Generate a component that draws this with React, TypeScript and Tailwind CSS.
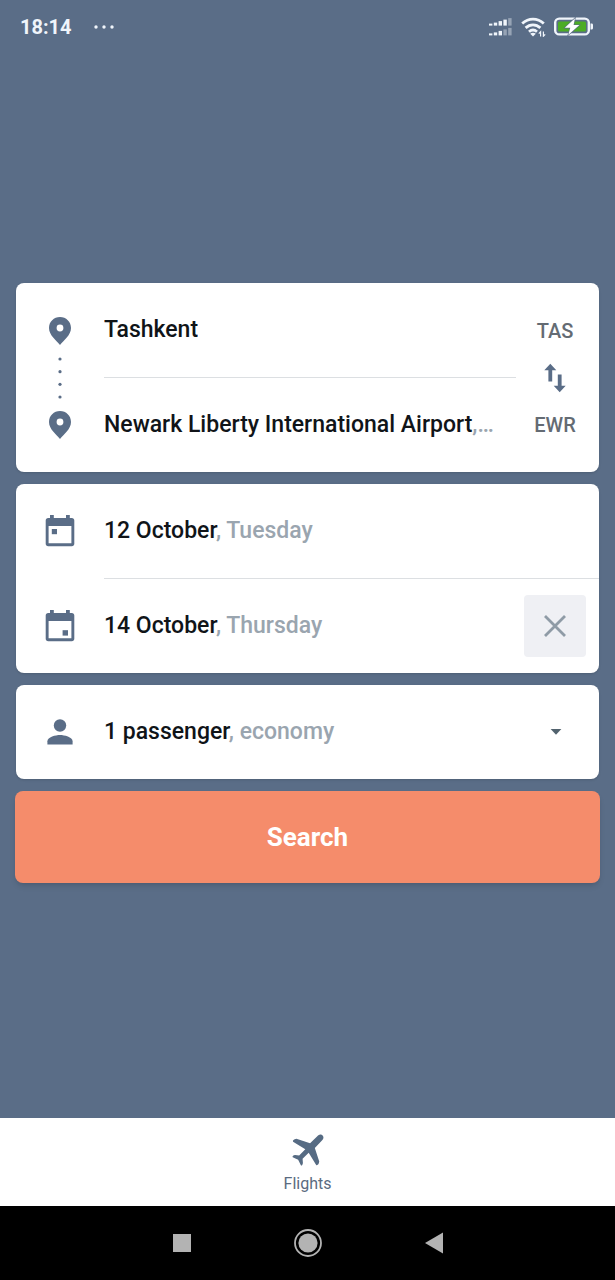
import React, { useState } from "react";

function SignalIcon() {
  const heights = [2, 3, 4.5, 6, 7.5];
  return (
    <svg width="24" height="20" viewBox="0 0 24 20" fill="#f0f5fb" aria-hidden="true">
      {heights.map((h, i) => (
        <g key={i}>
          <rect x={i * 4.8} y={8.6 - h} width="3.4" height={h} opacity={i > 3 ? 0.4 : 1} />
          <rect x={i * 4.8} y={18.4 - h} width="3.4" height={h} opacity={i > 2 ? 0.4 : 1} />
        </g>
      ))}
    </svg>
  );
}

function WifiIcon() {
  return (
    <svg width="25" height="20" viewBox="0 0 25 20" fill="none" stroke="#f0f5fb" strokeWidth="2.8" aria-hidden="true">
      <path d="M1.2 6.6C7.6 0.6 16.4 0.6 22.8 6.6" />
      <path d="M4.6 10.9C9 6.9 15 6.9 19.4 10.9" />
      <path d="M8 14.8C10.5 12.6 13.5 12.6 16 14.8" />
      <path d="M12 19.600l-2.800-2.800c1.600-1.500 4-1.500 5.600 0z" fill="#f0f5fb" stroke="none" />
      <path d="M19.600 19.400v-4.600l-1.800 1.800M22.400 14.600v4.600l1.800-1.800" strokeWidth="1.200" />
    </svg>
  );
}

function BatteryIcon() {
  return (
    <svg width="41" height="20" viewBox="0 0 41 20" aria-hidden="true">
      <rect x="1.200" y="1.600" width="33.600" height="15.800" rx="4" fill="none" stroke="#f0f5fb" strokeWidth="2.400" />
      <rect x="4" y="4.500" width="28" height="10" rx="1.500" fill="#4cac25" />
      <path d="M36.500 6.500h1c1 0 1.500.6 1.500 1.500v3c0 .9-.5 1.500-1.500 1.500h-1z" fill="#f0f5fb" />
      <path
        d="M21 1.200L10.800 10.800h5.500L14.200 18 25.400 8h-5.800z"
        fill="#fff"
        stroke="#5a6d87"
        strokeWidth="1.200"
        paintOrder="stroke"
      />
    </svg>
  );
}

function PinIcon() {
  return (
    <svg width="22" height="28" viewBox="0 0 22 28" fill="#5a6d87" aria-hidden="true">
      <path
        fillRule="evenodd"
        d="M11 0C4.900 0 0 4.800 0 10.900 0 18.200 7.500 23.400 11 28c3.500-4.600 11-9.800 11-17.100C22 4.800 17.100 0 11 0zm0 7.600a3.400 3.400 0 1 1 0 6.800 3.400 3.400 0 0 1 0-6.800z"
      />
    </svg>
  );
}

function DotsIcon() {
  return (
    <svg width="4" height="42" viewBox="0 0 4 42" fill="#5a6d87" aria-hidden="true">
      <circle cx="2" cy="2" r="1.600" />
      <circle cx="2" cy="14.700" r="1.600" />
      <circle cx="2" cy="27.300" r="1.600" />
      <circle cx="2" cy="40" r="1.600" />
    </svg>
  );
}

function CalendarIcon({ late = false }: { late?: boolean }) {
  return (
    <svg width="30" height="32" viewBox="0 0 30 32" fill="#5a6d87" aria-hidden="true">
      <rect x="5" y="0" width="3.800" height="6" />
      <rect x="21" y="0" width="3.800" height="6" />
      <path
        fillRule="evenodd"
        d="M3.200 3h23.600C28.300 3 29.300 4 29.300 5.500v23.200c0 1.500-1 2.500-2.500 2.500H3.200C1.700 31.200.7 30.200.7 28.700V5.500C.7 4 1.700 3 3.200 3zM3.600 11v17.300h22.800V11z"
      />
      {late ? <rect x="17.600" y="20.200" width="5.400" height="5.400" /> : <rect x="6.800" y="14" width="5.200" height="5.200" />}
    </svg>
  );
}

function PersonIcon() {
  return (
    <svg width="26" height="26" viewBox="0 0 26 26" fill="#5a6d87" aria-hidden="true">
      <circle cx="13" cy="6.500" r="6.200" />
      <path d="M.4 25.400v-3.200C.4 18 8.800 16 13 16s12.600 2 12.600 6.200v3.200z" />
    </svg>
  );
}

function SwapIcon() {
  return (
    <svg width="22" height="30" viewBox="0 0 22 30" fill="#5a6d87" aria-hidden="true">
      <path d="M6.300.8l6 6.400H8.200v11.300H4.400V7.200H.3z" />
      <path d="M15.700 29.200l-6-6.400h4.100V11.500h3.800v11.300h4.100z" />
    </svg>
  );
}

function PlaneIcon() {
  return (
    <svg width="34" height="32" viewBox="-7 -1 100 94" fill="#566b83" aria-hidden="true">
      <path d="M89 3C93 7 92 13 87 18L66 40L79 80C78 88 74 92 70 90L48 54L30 72L31 84C30 90 27 93 25 91L17 75L1 67C-1 65 2 62 8 61L20 62L38 44L2 22C0 18 4 14 12 13L52 26L74 5C79 0 85-1 89 3Z" />
    </svg>
  );
}

const card = "mx-px rounded-lg bg-white shadow-sm";
const rowButton = "flex min-h-[94px] min-w-0 flex-1 items-center text-left";
const iconCell = "flex w-[88px] shrink-0 justify-center";

export default function App() {
  const [reversed, setReversed] = useState(false);
  const [hasReturn, setHasReturn] = useState(true);
  const places = [
    { name: "Tashkent", rest: "", code: "TAS" },
    { name: "Newark Liberty International Airport", rest: ",…", code: "EWR" },
  ];
  const [from, to] = reversed ? [places[1], places[0]] : places;

  return (
    <div className="flex min-h-screen flex-col bg-[#5a6d87] font-['Roboto',sans-serif] text-[23px] leading-7 font-medium text-[#101418]">
      <header className="flex h-[54px] items-center px-5 text-[#f0f5fb]">
        <time className="text-[20px] font-bold">18:14</time>
        <svg className="ml-[22px]" width="22" height="4" viewBox="0 0 22 4" fill="#f0f5fb" aria-hidden="true">
          <circle cx="2" cy="2" r="1.700" />
          <circle cx="10" cy="2" r="1.700" />
          <circle cx="18" cy="2" r="1.700" />
        </svg>
        <div className="ml-auto flex items-center gap-2">
          <SignalIcon />
          <WifiIcon />
          <BatteryIcon />
        </div>
      </header>

      <main className="flex flex-1 flex-col justify-center gap-3 px-[15px] pb-1.5">
        <section className={`${card} flex`}>
          <div className="flex w-[88px] shrink-0 flex-col items-center justify-center gap-3">
            <PinIcon />
            <DotsIcon />
            <PinIcon />
          </div>
          <div className="flex min-w-0 flex-1 flex-col">
            <button type="button" className={rowButton}>
              <span className="truncate">{from.name}<span className="text-[#9aa5af]">{from.rest}</span></span>
            </button>
            <hr className="border-[#dcdfe2]" />
            <button type="button" className={rowButton}>
              <span className="truncate">{to.name}<span className="text-[#9aa5af]">{to.rest}</span></span>
            </button>
          </div>
          <div className="mr-[13px] ml-2 flex w-[62px] shrink-0 flex-col items-center justify-center gap-[18px] text-[20px] text-[#646b73]">
            <span>{from.code}</span>
            <button type="button" aria-label="Swap airports" onClick={() => setReversed(!reversed)}>
              <SwapIcon />
            </button>
            <span>{to.code}</span>
          </div>
        </section>

        <section className={card}>
          <div className="flex">
            <button type="button" className={rowButton}>
              <span className={iconCell}><CalendarIcon /></span>
              <span>12 October<span className="text-[#9aa5af]">, Tuesday</span></span>
            </button>
          </div>
          <hr className="ml-[88px] border-[#dcdfe2]" />
          <div className="flex items-center">
            <button type="button" className={rowButton} onClick={() => setHasReturn(true)}>
              <span className={iconCell}><CalendarIcon late /></span>
              {hasReturn && <span>14 October<span className="text-[#9aa5af]">, Thursday</span></span>}
            </button>
            <button
              type="button"
              aria-label="Remove return date"
              onClick={() => setHasReturn(false)}
              className="mr-[13px] flex size-[62px] items-center justify-center rounded bg-[#eff0f4]"
            >
              <svg width="22" height="22" viewBox="0 0 22 22" fill="none" stroke="#8f9ba6" strokeWidth="2.800" aria-hidden="true">
                <path d="M1 1L21 21M21 1L1 21" />
              </svg>
            </button>
          </div>
        </section>

        <section className={`${card} flex`}>
          <button type="button" className={rowButton}>
            <span className={iconCell}><PersonIcon /></span>
            <span>1 passenger<span className="text-[#9aa5af]">, economy</span></span>
            <span className="mr-3 ml-auto flex w-[62px] justify-center">
              <svg width="12" height="6" viewBox="0 0 12 6" fill="#52636e" aria-hidden="true">
                <path d="M.6 0h10.800L6 5.800z" />
              </svg>
            </span>
          </button>
        </section>

        <button type="button" className="h-[92px] rounded-lg bg-[#f58c6b] text-[26px] font-bold text-white shadow-md">
          Search
        </button>
      </main>

      <nav className="flex h-[88px] justify-center bg-white text-[16px] leading-5 font-normal text-[#5a6b80]">
        <a href="#flights" className="flex flex-col items-center justify-center gap-2 px-6 pt-1">
          <PlaneIcon />
          Flights
        </a>
      </nav>

      <footer className="flex h-[74px] items-center justify-center bg-black">
        <button type="button" aria-label="Recent apps" className="flex w-[126px] justify-center">
          <svg width="18" height="18" viewBox="0 0 18 18" fill="#b3b3b3" aria-hidden="true">
            <rect width="18" height="18" />
          </svg>
        </button>
        <button type="button" aria-label="Home" className="flex w-[126px] justify-center">
          <svg width="28" height="28" viewBox="0 0 28 28" fill="#b3b3b3" aria-hidden="true">
            <circle cx="14" cy="14" r="9.600" />
            <circle cx="14" cy="14" r="13" fill="none" stroke="#b3b3b3" strokeWidth="1.800" />
          </svg>
        </button>
        <button type="button" aria-label="Back" className="flex w-[126px] justify-center">
          <svg width="18" height="22" viewBox="0 0 18 22" fill="#b3b3b3" aria-hidden="true">
            <path d="M18 .4v21.200L0 11z" />
          </svg>
        </button>
      </footer>
    </div>
  );
}
